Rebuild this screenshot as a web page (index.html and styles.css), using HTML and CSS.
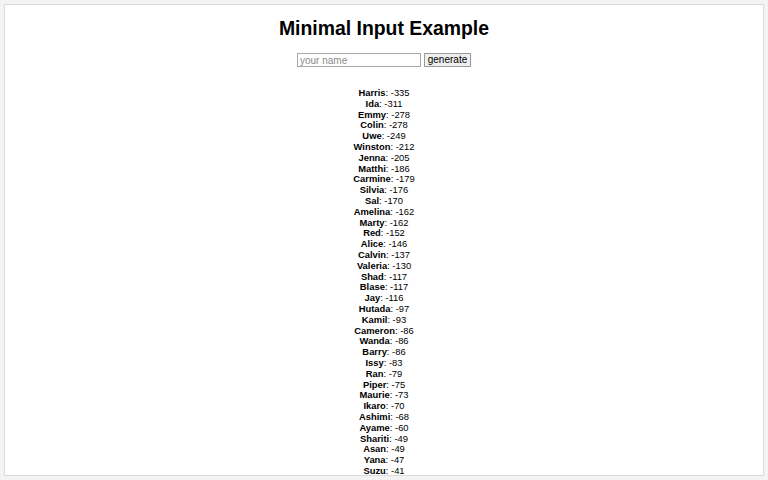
FILE: index.html
```html
<!DOCTYPE html>
<html>
<head>
<meta charset="utf-8">
<link rel="stylesheet" href="styles.css">
</head>
<body>
<div class="app">
  <h1 class="title">Minimal Input Example</h1>
  <div class="form">
    <input class="name-input" type="text" placeholder="your name">
    <button class="gen-btn">generate</button>
  </div>
  <ul class="list">
    <li><b>Harris</b>: -335</li>
    <li><b>Ida</b>: -311</li>
    <li><b>Emmy</b>: -278</li>
    <li><b>Colin</b>: -278</li>
    <li><b>Uwe</b>: -249</li>
    <li><b>Winston</b>: -212</li>
    <li><b>Jenna</b>: -205</li>
    <li><b>Matthi</b>: -186</li>
    <li><b>Carmine</b>: -179</li>
    <li><b>Silvia</b>: -176</li>
    <li><b>Sal</b>: -170</li>
    <li><b>Amelina</b>: -162</li>
    <li><b>Marty</b>: -162</li>
    <li><b>Red</b>: -152</li>
    <li><b>Alice</b>: -146</li>
    <li><b>Calvin</b>: -137</li>
    <li><b>Valeria</b>: -130</li>
    <li><b>Shad</b>: -117</li>
    <li><b>Blase</b>: -117</li>
    <li><b>Jay</b>: -116</li>
    <li><b>Hutada</b>: -97</li>
    <li><b>Kamil</b>: -93</li>
    <li><b>Cameron</b>: -86</li>
    <li><b>Wanda</b>: -86</li>
    <li><b>Barry</b>: -86</li>
    <li><b>Issy</b>: -83</li>
    <li><b>Ran</b>: -79</li>
    <li><b>Piper</b>: -75</li>
    <li><b>Maurie</b>: -73</li>
    <li><b>Ikaro</b>: -70</li>
    <li><b>Ashimi</b>: -68</li>
    <li><b>Ayame</b>: -60</li>
    <li><b>Shariti</b>: -49</li>
    <li><b>Asan</b>: -49</li>
    <li><b>Yana</b>: -47</li>
    <li><b>Suzu</b>: -41</li>
  </ul>
</div>
</body>
</html>
```
FILE: styles.css
```css
html, body {
  margin: 0;
  padding: 0;
  height: 100%;
}
body {
  background: #f3f3f3;
  padding: 4px;
  box-sizing: border-box;
  font-family: "Liberation Sans", Arial, sans-serif;
  color: #000;
}
.app {
  background: #fff;
  border: 1px solid #dcdcdc;
  height: 100%;
  box-sizing: border-box;
  overflow: hidden;
  display: flex;
  flex-direction: column;
  align-items: center;
}
.title {
  font-size: 19.4px;
  font-weight: bold;
  margin: 12px 0 0 0;
  line-height: 23px;
}
.form {
  display: flex;
  gap: 3px;
  margin-top: 13px;
}
.name-input {
  width: 124px;
  height: 14px;
  box-sizing: border-box;
  border: 1px solid #a9a9a9;
  font-family: "Liberation Sans", Arial, sans-serif;
  font-size: 10px;
  padding: 0 2px;
  margin: 0;
}
.name-input::placeholder {
  color: #8a8a8a;
}
.gen-btn {
  width: 47px;
  height: 14px;
  box-sizing: border-box;
  border: 1px solid #9a9a9a;
  background: #efefef;
  font-family: "Liberation Sans", Arial, sans-serif;
  font-size: 10px;
  padding: 0;
  margin: 0;
  line-height: 12px;
  color: #000;
}
.list {
  list-style: none;
  margin: 21px 0 0 0;
  padding: 0;
  font-size: 9.4px;
  line-height: 10.8px;
  text-align: center;
}
.list b {
  font-weight: bold;
}
```
